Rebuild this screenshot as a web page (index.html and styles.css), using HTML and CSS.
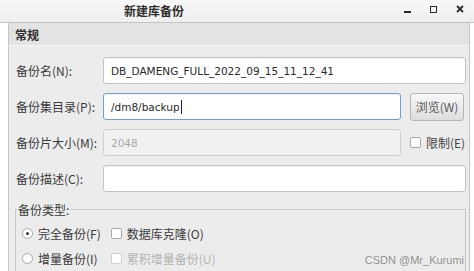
FILE: index.html
```html
<!DOCTYPE html>
<html>
<head>
<meta charset="utf-8">
<link rel="stylesheet" href="styles.css">
</head>
<body>
<div class="window">
  <div class="titlebar">
    <span class="title">新建库备份</span>
    <div class="controls">
      <span class="ctl ctl-min"></span>
      <span class="ctl ctl-max"></span>
      <svg class="ctl-close" width="8" height="8" viewBox="0 0 8 8"><path d="M1 1L7 7M7 1L1 7" stroke="#2a2a2a" stroke-width="1.8"/></svg>
    </div>
  </div>
  <div class="body">
    <div class="panel">
      <div class="tabhead">常规</div>
      <div class="content">
        <div class="form">
          <label class="lbl">备份名(N):</label>
          <div class="input span2">DB_DAMENG_FULL_2022_09_15_11_12_41</div>

          <label class="lbl">备份集目录(P):</label>
          <div class="input focus">/dm8/backup<span class="caret"></span></div>
          <div class="btn">浏览(W)</div>

          <label class="lbl">备份片大小(M):</label>
          <div class="input disabled">2048</div>
          <div class="check"><span class="box"></span><span>限制(E)</span></div>

          <label class="lbl">备份描述(C):</label>
          <div class="input span2"></div>
        </div>
        <fieldset class="group">
          <legend>备份类型:</legend>
          <div class="opts">
            <div class="opt"><span class="radio on"></span><span>完全备份(F)</span></div>
            <div class="opt"><span class="box"></span><span>数据库克隆(O)</span></div>
            <div class="opt"><span class="radio"></span><span>增量备份(I)</span></div>
            <div class="opt off"><span class="box"></span><span>累积增量备份(U)</span></div>
          </div>
        </fieldset>
      </div>
    </div>
  </div>
  <div class="watermark">CSDN @Mr_Kurumi</div>
</div>
</body>
</html>
```
FILE: styles.css
```css
* { box-sizing: border-box; }
html, body { margin: 0; padding: 0; }
body {
  width: 474px; height: 271px; overflow: hidden; background: #fff;
  font-family: "Noto Sans CJK SC", "DejaVu Sans", sans-serif;
  font-size: 12px; color: #3a3a3a;
}
.window { position: relative; width: 474px; height: 271px; display: flex; flex-direction: column; }
.titlebar {
  height: 23px; flex: none; background: linear-gradient(#f7f7f7, #efefef);
  border-bottom: 1px solid #c4c4c4; display: flex; align-items: center;
  padding-left: 124px; padding-right: 10px;
}
.title { font-weight: bold; font-size: 12px; color: #2e2e2e; margin-top: -2px; }
.controls { margin-left: auto; margin-top: -4px; display: flex; align-items: center; gap: 19px; }
.ctl-min { width: 7px; height: 2px; background: #2a2a2a; margin-top: 6px; }
.ctl-max { width: 7px; height: 7px; border: 1.6px solid #2a2a2a; }
.ctl-close { display: block; }
.body { flex: 1; display: flex; padding: 0 4px 0 8px; }
.panel { flex: 1; background: #ececec; border-left: 1px solid #c6c6c6; border-right: 1px solid #c6c6c6; display: flex; flex-direction: column; }
.tabhead {
  height: 23px; background: #e3e3e3; font-weight: bold; color: #2e2e2e;
  padding-left: 6px; display: flex; align-items: center; border-bottom: 1px solid #f6f6f6;
}
.content { padding: 11px 3px 0 6px; }
.form {
  display: grid; grid-template-columns: 88px 1fr 56px;
  grid-auto-rows: 27px; row-gap: 9px; column-gap: 9px; align-items: center;
}
.form .lbl { white-space: nowrap; padding-left: 1px; }
.form > .lbl + .input { margin-left: -9px; }
.span2 { grid-column: 2 / 4; }
.input {
  height: 27px; background: #fff; border: 1px solid #c4c4c4; border-radius: 3px;
  padding: 0 7px; display: flex; align-items: center; font-size: 10.5px; color: #2a2a2a;
  font-family: "DejaVu Sans", sans-serif;
  box-shadow: inset 0 1px 1px rgba(0,0,0,0.05);
}
.input.focus { border-color: #6d9fd2; }
.caret { display: inline-block; width: 1px; height: 14px; background: #222; margin-left: 1px; }
.input.disabled { background: #f1f1f1; border-color: #d0d0d0; color: #a8a8a8; box-shadow: none; }
.btn {
  height: 28px; border: 1px solid #b6b6b6; border-radius: 3px;
  background: linear-gradient(#f8f8f8, #dedede); display: flex; align-items: center; justify-content: center;
  color: #5a5a5a; margin-right: 2px;
}
.check { display: flex; align-items: center; gap: 5px; white-space: nowrap; color: #444; }
.box { width: 11px; height: 11px; background: #fff; border: 1px solid #a8a8a8; border-radius: 2px; flex: none; }
.group {
  margin: 9px 0 0 0; padding: 3px 0 0 6px; border: 1px solid #c8c8c8; border-bottom: none;
  height: 80px;
}
.group legend { padding: 0 1px; margin-left: -5px; color: #3a3a3a; }
.opts { display: grid; grid-template-columns: auto auto; justify-content: start; column-gap: 10px; grid-auto-rows: 25px; align-items: center; }
.opt { display: flex; align-items: center; gap: 5px; color: #3a3a3a; white-space: nowrap; }
.opt.off { color: #b4b4b4; }
.opt.off .box { border-color: #cfcfcf; }
.radio { width: 11px; height: 11px; border-radius: 50%; background: #fff; border: 1px solid #a8a8a8; flex: none; position: relative; }
.radio.on::after { content: ""; position: absolute; left: 3px; top: 3px; width: 3px; height: 3px; border-radius: 50%; background: #333; }
.watermark {
  position: absolute; right: 10px; bottom: 5px; font-family: "Liberation Sans", sans-serif;
  font-size: 11px; color: rgba(120,120,120,0.8);
}
```
